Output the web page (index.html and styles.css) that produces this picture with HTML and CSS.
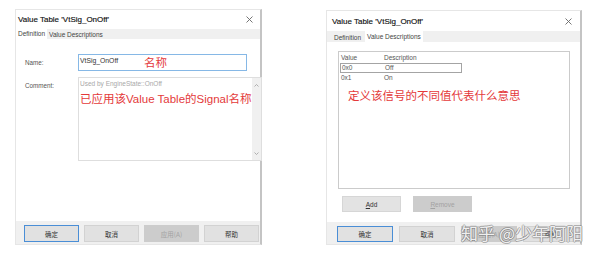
FILE: index.html
```html
<!DOCTYPE html>
<html lang="zh">
<head>
  <meta charset="UTF-8">
  <title>Value Table</title>
  <link rel="stylesheet" href="styles.css">
</head>
<body>
  <div class="screen">
    <div class="dialog dialog-def">
      <div class="titlebar">
        <span class="title">Value Table 'VtSig_OnOff'</span>
        <svg class="close" width="7" height="7" viewBox="0 0 7 7"><path d="M0.5 0.5 L6.5 6.5 M6.5 0.5 L0.5 6.5"/></svg>
      </div>
      <div class="tabs">
        <span class="tab active">Definition</span>
        <span class="tab">Value Descriptions</span>
      </div>
      <div class="page page-def">
        <div class="field">
          <span class="label">Name:</span>
          <div class="input">
            <span class="value">VtSig_OnOff</span>
            <span class="note note-name">名称</span>
          </div>
        </div>
        <div class="field">
          <span class="label">Comment:</span>
          <div class="textarea">
            <div class="textarea-body">
              <span class="hint">Used by EngineState::OnOff</span>
              <span class="note">已应用该Value Table的Signal名称</span>
            </div>
            <div class="scrollbar">
              <svg width="5" height="3" viewBox="0 0 5 3"><path d="M0.5 2.5 L2.5 0.5 L4.5 2.5"/></svg>
              <svg width="5" height="3" viewBox="0 0 5 3"><path d="M0.5 0.5 L2.5 2.5 L4.5 0.5"/></svg>
            </div>
          </div>
        </div>
      </div>
      <div class="footer">
        <button class="btn default">确定</button>
        <button class="btn">取消</button>
        <button class="btn disabled">应用(A)</button>
        <button class="btn">帮助</button>
      </div>
    </div>

    <div class="dialog dialog-desc">
      <div class="titlebar">
        <span class="title">Value Table 'VtSig_OnOff'</span>
        <svg class="close" width="7" height="7" viewBox="0 0 7 7"><path d="M0.5 0.5 L6.5 6.5 M6.5 0.5 L0.5 6.5"/></svg>
      </div>
      <div class="tabs">
        <span class="tab">Definition</span>
        <span class="tab active">Value Descriptions</span>
      </div>
      <div class="page page-desc">
        <div class="listbox">
          <div class="row head"><span class="col-value">Value</span><span>Description</span></div>
          <div class="row selected"><span class="col-value">0x0</span><span>Off</span></div>
          <div class="row"><span class="col-value">0x1</span><span>On</span></div>
          <span class="note note-desc">定义该信号的不同值代表什么意思</span>
        </div>
        <div class="list-actions">
          <button class="btn wide"><u>A</u>dd</button>
          <button class="btn wide disabled"><u>R</u>emove</button>
        </div>
      </div>
      <div class="footer">
        <button class="btn default">确定</button>
        <button class="btn">取消</button>
        <button class="btn disabled">应用(A)</button>
        <button class="btn">帮助</button>
        <span class="watermark">知乎 @少年阿阳</span>
      </div>
    </div>
  </div>
</body>
</html>
```

FILE: styles.css
```css
body {
  margin: 0;
  background-color: #ffffff;
  font-family: "Liberation Sans", "Noto Sans CJK SC", sans-serif;
  color: #222;
}

.screen {
  display: flex;
  align-items: flex-start;
  gap: 64px;
  padding: 9px 0 0 15px;
}

.dialog {
  display: flex;
  flex-direction: column;
  box-sizing: border-box;
  background-color: #ffffff;
  border: 1px solid #e6e6e6;
  border-right: 2px solid #c4c4c4;
}

.dialog-def {
  width: 247px;
  height: 236px;
}

.dialog-desc {
  width: 256px;
  height: 235px;
  margin-top: 1px;
}

.titlebar {
  height: 19px;
  flex: none;
  display: flex;
  align-items: center;
  justify-content: space-between;
  padding: 0 7px 0 2px;
}

.dialog-desc .titlebar {
  height: 20px;
  padding-left: 5px;
  padding-right: 8px;
}

.title {
  font-size: 8px;
  color: #111;
  -webkit-text-stroke: 0.15px #111;
}

.close path {
  stroke: #666;
  stroke-width: 0.9;
  fill: none;
}

.tabs {
  height: 10px;
  flex: none;
  display: flex;
  align-items: flex-end;
  background-color: #f0f0f0;
  font-size: 6.5px;
  color: #444;
}

.dialog-desc .tabs {
  height: 11px;
  padding-left: 5px;
}

.tab {
  height: 9px;
  line-height: 9px;
  padding: 0 2px;
}

.tab.active {
  height: 10px;
  line-height: 10px;
  background-color: #ffffff;
}

.dialog-desc .tab.active {
  height: 11px;
  line-height: 11px;
  margin-left: 2px;
}

.page {
  flex: 1;
  box-sizing: border-box;
}

.page-def {
  padding: 15px 13px 0 9px;
}

.field {
  display: flex;
  margin-bottom: 6px;
}

.label {
  width: 53px;
  flex: none;
  font-size: 6.3px;
  color: #555;
  padding-top: 5px;
}

.input {
  flex: 1;
  height: 17px;
  box-sizing: border-box;
  border: 1px solid #86b8e6;
  display: flex;
  align-items: flex-start;
}

.value {
  font-size: 6.8px;
  color: #333;
  padding: 2px 0 0 1px;
}

.note {
  font-family: "Liberation Sans", "Noto Sans CJK SC", sans-serif;
  font-size: 11.5px;
  color: #e4393a;
  line-height: 14px;
  white-space: nowrap;
}

.note-name {
  align-self: center;
  margin-left: 26px;
}

.textarea {
  flex: 1;
  height: 84px;
  box-sizing: border-box;
  border: 1px solid #dedede;
  display: flex;
}

.textarea-body {
  flex: 1;
  min-width: 0;
  display: flex;
  flex-direction: column;
  padding: 2px 0 0 1px;
}

.hint {
  font-size: 6.5px;
  color: #a8a8a8;
}

/* the annotation is painted over the scrollbar, as in the screenshot */
.textarea-body .note {
  position: relative;
  z-index: 1;
  margin-top: 5px;
}

.scrollbar {
  width: 9px;
  flex: none;
  background-color: #f0f0f0;
  display: flex;
  flex-direction: column;
  justify-content: space-between;
  align-items: center;
  padding: 6px 0 5px;
}

.scrollbar path {
  stroke: #a0a0a0;
  stroke-width: 0.8;
  fill: none;
}

.footer {
  position: relative;
  height: 23px;
  flex: none;
  box-sizing: border-box;
  display: flex;
  gap: 5px;
  padding: 4px 0 0 8px;
  background-color: #f0f0f0;
}

.dialog-desc .footer {
  height: 22px;
  gap: 6px;
  padding-left: 10px;
}

.btn {
  width: 55px;
  height: 17px;
  box-sizing: border-box;
  padding: 0;
  border: 1px solid #d2d2d2;
  background-color: #e1e1e1;
  font-family: "Noto Sans CJK SC", "Liberation Sans", sans-serif;
  font-size: 6.5px;
  color: #333;
}

.dialog-desc .footer .btn {
  width: 56px;
  height: 16px;
}

.btn.default {
  border-color: #4a8ed6;
}

.btn.disabled {
  background-color: #cccccc;
  border-color: #cccccc;
  color: #a2a2a2;
}

.page-desc {
  padding: 9px 10px 0 11px;
}

.listbox {
  height: 138px;
  box-sizing: border-box;
  border: 1px solid #cbcbcb;
  padding: 0 1px;
  display: flex;
  flex-direction: column;
  align-items: flex-start;
}

.row {
  display: flex;
  width: 122px;
  height: 10px;
  box-sizing: border-box;
  line-height: 10px;
  font-size: 6.5px;
  color: #555;
  padding-left: 1px;
}

.row.head {
  height: 11px;
  line-height: 11px;
}

.row.selected {
  border: 1px solid #a4a4a4;
  line-height: 8px;
}

.col-value {
  width: 43px;
}

.note-desc {
  margin: 6px 0 0 8px;
}

.list-actions {
  display: flex;
  gap: 12px;
  padding: 7px 0 0 4px;
}

.btn.wide {
  width: 59px;
  height: 16px;
  font-family: "Liberation Sans", sans-serif;
  font-size: 6.5px;
  border-color: #d6d6d6;
  background-color: #e3e3e3;
}

.btn.wide.disabled {
  background-color: #cccccc;
  border-color: #cccccc;
}

.watermark {
  position: absolute;
  right: -3px;
  top: 1px;
  font-family: "Noto Sans CJK SC", sans-serif;
  font-size: 17px;
  line-height: 19px;
  white-space: nowrap;
  color: rgba(255, 255, 255, 0.9);
  text-shadow: 1px 0 0 rgba(110, 110, 110, 0.5), -1px 0 0 rgba(110, 110, 110, 0.5), 0 1px 0 rgba(110, 110, 110, 0.5), 0 -1px 0 rgba(110, 110, 110, 0.5);
}
```
